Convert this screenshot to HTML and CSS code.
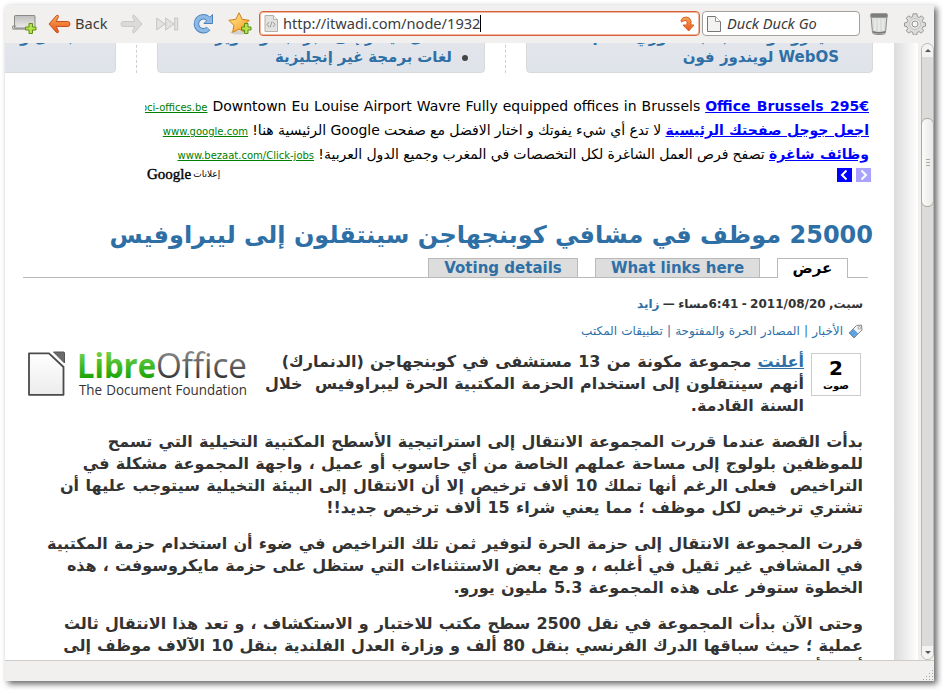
FILE: index.html
```html
<!doctype html>
<html>
	<head>
		<meta charset="utf-8" />
		<title>itwadi</title>
		<link rel="stylesheet" href="styles.css">
	</head>

	<body>
		<div class="window">
			<div class="toolbar">
				<svg class="icon-newtab" width="26" height="22" viewBox="0 0 26 22">
					<defs>
						<linearGradient id="gGrey" x1="0" y1="0" x2="0" y2="1"><stop offset="0" stop-color="#bdbdbb" /><stop offset="1" stop-color="#ececea" /></linearGradient>
						<linearGradient id="gOrange" x1="0" y1="0" x2="0" y2="1"><stop offset="0" stop-color="#f7a95a" /><stop offset="1" stop-color="#e8541c" /></linearGradient>
						<linearGradient id="gStar" x1="0" y1="0" x2="1" y2="1"><stop offset="0" stop-color="#fff29a" /><stop offset="1" stop-color="#f7931e" /></linearGradient>
					</defs>
					<path d="M3.500 2.500h19q.5 0 .5.500v12H2.500V3q0-.5 1-.5z" fill="url(#gGrey)" stroke="#8a8a87" />
					<path d="M.7 15.500V13h3.500" fill="none" stroke="#8a8a87" />
					<path d="M.5 16h23" stroke="#777" />
					<path d="M17 10.500h3.500v3.500H24v3h-3.500v3.500H17V17h-3.500v-3H17z" fill="#b4e04a" stroke="#5f8f14" />
				</svg>
				<svg class="icon-back" width="23" height="20" viewBox="0 0 23 20">
					<path d="M1 10l7.500-8.500q2-1 2 1L8.300 7.500h11.500q2.200 0 2.200 2.500t-2.200 2.500H8.300l2.200 5q0 2-2 1z" fill="url(#gOrange)" stroke="#c4521a" />
				</svg>
				<span class="back-label">Back</span>
				<svg class="icon-forward" width="23" height="20" viewBox="0 0 23 20">
					<path d="M22 10l-7.500-8.500q-2-1-2 1l2.200 5H3.200Q1 7.500 1 10t2.200 2.500h11.500l-2.200 5q0 2 2 1z" fill="#dcdad8" stroke="#cbc9c6" />
				</svg>
				<svg class="icon-skip" width="23" height="14" viewBox="0 0 23 14">
					<path d="M.7 1l8.300 6-8.300 6zM9.700 1l8.300 6-8.300 6zM18.700 1h3v12h-3z" fill="#e4e2e0" stroke="#c6c4c1" />
				</svg>
				<svg class="icon-reload" width="21" height="22" viewBox="0 0 21 22">
					<path d="M15.500 15.500A7 7 0 1 1 15 5.500" fill="none" stroke="#4d83bd" stroke-width="5.500" />
					<path d="M11 10.500h8.500V1.500z" fill="#8db9e6" stroke="#4d83bd" stroke-linejoin="round" />
					<path d="M15.300 15.700A7 7 0 1 1 15 5.500l1 1" fill="none" stroke="#8db9e6" stroke-width="3.700" />
				</svg>
				<svg class="icon-star" width="24" height="23" viewBox="0 0 24 23">
					<ellipse cx="11" cy="20.500" rx="9" ry="2" fill="#d3d1cf" />
					<path d="M11 .8l3.200 6.500 7 1-5 5 1.200 7-6.400-3.200-6.300 3.200 1.200-7-5-5 7-1z" fill="url(#gStar)" stroke="#d07d10" stroke-linejoin="round" />
					<path d="M16.500 11.500H20V15h3v3h-3v3.500h-3.500V18h-3v-3h3z" fill="#b4e04a" stroke="#5f8f14" />
				</svg>
				<div class="url-field">
					<svg width="14" height="17" viewBox="0 0 14 17">
						<path d="M1 .5h8.500l4 4v12H1z" fill="#e2e2e0" stroke="#b3b1ae" />
						<path d="M9.500.5v4h4" fill="#f6f6f5" stroke="#b3b1ae" />
						<path d="M5 7L3 9.500 5 12M9 7l2 2.500L9 12M8 6.500l-2 6" fill="none" stroke="#9b9b99" />
					</svg>
					<span class="url">http://itwadi.com/node/1932</span><span class="caret"></span>
					<svg class="icon-go" width="15" height="16" viewBox="0 0 15 16">
						<path d="M1 4.500Q2 1 6 1t5 4v4h3l-5.300 6L3 9h4V6Q7 4 5 4.300L1.500 6z" fill="url(#gOrange)" stroke="#dc6426" stroke-linejoin="round" />
					</svg>
				</div>
				<div class="search-field">
					<svg width="14" height="16" viewBox="0 0 14 16">
						<path d="M.5.500h8l5 5v10H.5z" fill="#f3f3f2" stroke="#777" />
						<path d="M8.500.5v5h5" fill="#fff" stroke="#999" />
					</svg>
					<span class="search-text">Duck Duck Go</span>
				</div>
				<svg class="icon-trash" width="18" height="22" viewBox="0 0 18 22">
					<path d="M1 3l1.500 16.500q0 2 6.500 2t6.500-2L17 3z" fill="#dcdddb" stroke="#8a8c89" />
					<path d="M3 18q6 2 12 0v1.800q-6 2-12 0z" fill="#777976" />
					<path d="M5 6v11M9 6v12M13 6v11" stroke="#f3f4f2" />
					<rect x=".5" y=".5" width="17" height="4" rx="1.500" fill="#7c7e7b" stroke="#9a9c99" />
				</svg>
				<svg class="icon-gear" width="22" height="22" viewBox="0 0 22 22">
					<path d="M9 .8h4l.4 2.800 1.800.8 2.300-1.600 2.300 2.500-1.500 2.200.8 1.900 2.400.5v3.200l-2.500.6-.8 1.900 1.500 2.200-2.400 2.300-2.300-1.500-1.800.8-.5 2.600H9.300l-.6-2.600-1.800-.8-2.300 1.500-2.300-2.300 1.500-2.200-.8-1.900-2.500-.6V9.900l2.500-.5.8-1.900-1.500-2.300 2.300-2.400 2.300 1.600 1.800-.8z" fill="#dcdcda" stroke="#979794" />
					<circle cx="11" cy="11" r="5.500" fill="#e6e6e4" stroke="#c3c3c0" />
					<circle cx="11" cy="11" r="3" fill="#f3f3f2" stroke="#979794" />
				</svg>
			</div>

			<div class="viewport">
				<div class="page" dir="rtl">
					<div class="cards">
						<div class="card card-first">مايكروسوفت تجذب مطوري نظام<br>WebOS لويندوز فون</div>
						<div class="card card-middle">مدخل ميسر إلى البرمجة وتطوير<br>لغات برمجة غير إنجليزية</div>
						<div class="card card-last">بدائل و</div>
					</div>

					<div class="ads">
						<div class="ad ad-en"><bdi><a class="ad-title" href="#">Office Brussels 295€</a></bdi> <bdi>Downtown Eu Louise Airport Wavre Fully equipped offices in Brussels</bdi> <bdi><a class="ad-url" href="#">www.bci-offices.be</a></bdi></div>
						<div class="ad"><a class="ad-title" href="#">اجعل جوجل صفحتك الرئيسية</a> لا تدع أي شيء يفوتك و اختار الافضل مع صفحت Google الرئيسية هنا! <a class="ad-url" href="#">www.google.com</a></div>
						<div class="ad"><a class="ad-title" href="#">وظائف شاغرة</a> تصفح فرص العمل الشاغرة لكل التخصصات في المغرب وجميع الدول العربية! <a class="ad-url" href="#">www.bezaat.com/Click-jobs</a></div>
						<div class="ads-footer">
							<div class="pager">
								<svg class="next" width="15" height="14" viewBox="0 0 15 14"><path d="M5.500 2.500L10 7l-4.500 4.500" /></svg>
								<svg class="prev" width="15" height="14" viewBox="0 0 15 14"><path d="M9.500 2.500L5 7l4.500 4.500" /></svg>
							</div>
							<div class="google-ads"><span class="ads-by">إعلانات</span><span class="google">Google</span></div>
						</div>
					</div>

					<h1 class="title">25000 موظف في مشافي كوبنجهاجن سينتقلون إلى ليبراوفيس</h1>

					<div class="tabs">
						<div class="tab active">عرض</div>
						<div class="tab links">What links here</div>
						<div class="tab voting">Voting details</div>
					</div>

					<div class="submitted">سبت, 2011/08/20 - 6:41مساء — <a href="#">زايد</a></div>

					<div class="terms">
						<svg width="15" height="15" viewBox="0 0 15 15">
							<path d="M1 9L8.500 1.500l5-.5.5 5L6 14z" fill="#f4f4f4" stroke="#888" />
							<path d="M1.500 9L5.500 5l4.500 4.500L6 13.500z" fill="#3f92da" />
							<path d="M3 7.500L7.500 12M4.500 6L9 10.500M3 10.500L6.500 7M5 12.200L8.500 9" stroke="#a6d2f5" stroke-width=".5" />
							<circle cx="11.300" cy="3.800" r="1.300" fill="#fff" stroke="#888" stroke-width=".8" />
						</svg>
						<span>الأخبار | المصادر الحرة والمفتوحة | تطبيقات المكتب</span>
					</div>

					<div class="article">
						<div class="lead">
							<div class="votes"><span class="count">2</span><span class="unit">صوت</span></div>
							<p class="lead-text"><a href="#">أعلنت</a> مجموعة مكونة من 13 مستشفى في كوبنجهاجن (الدنمارك)<br>أنهم سينتقلون إلى استخدام الحزمة المكتبية الحرة ليبراوفيس&nbsp; خلال<br>السنة القادمة.</p>
							<svg class="logo" width="222" height="50" viewBox="0 0 222 50" direction="ltr">
								<defs>
									<linearGradient id="gLibre" x1="0" y1="0" x2="0" y2="1"><stop offset=".2" stop-color="#72d34e" /><stop offset=".8" stop-color="#18a303" /></linearGradient>
									<linearGradient id="gOffice" x1="0" y1="0" x2="0" y2="1"><stop offset=".2" stop-color="#8a8a8a" /><stop offset=".8" stop-color="#333" /></linearGradient>
									<linearGradient id="gDoc" x1="0" y1="0" x2="0" y2="1"><stop offset="0" stop-color="#fff" /><stop offset="1" stop-color="#ececec" /></linearGradient>
								</defs>
								<path d="M4 2.300h20L38.500 16v27.800H4z" fill="url(#gDoc)" stroke="#4a4a4a" stroke-width="1.800" stroke-linejoin="round" />
								<path d="M28.500 1H38.500q1 0 1 1V12z" fill="#6b6b6b" stroke="#555" />
								<text class="libre" x="52" y="27" textLength="79" lengthAdjust="spacingAndGlyphs" fill="url(#gLibre)">Libre</text>
								<text class="office" x="131" y="27" textLength="91" lengthAdjust="spacingAndGlyphs" fill="url(#gOffice)">Office</text>
								<text class="tdf" x="54" y="43.500" textLength="168" lengthAdjust="spacingAndGlyphs">The Document Foundation</text>
							</svg>
						</div>
						<p>بدأت القصة عندما قررت المجموعة الانتقال إلى استراتيجية الأسطح المكتبية التخيلية التي تسمح<br>للموظفين بلولوج إلى مساحة عملهم الخاصة من أي حاسوب أو عميل ، واجهة المجموعة مشكلة في<br><span class="loose">التراخيص&nbsp; فعلى الرغم أنها تملك 10 ألاف ترخيص إلا أن الانتقال إلى البيئة التخيلية سيتوجب عليها أن</span><br>تشتري ترخيص لكل موظف ؛ مما يعني شراء 15 ألاف ترخيص جديد!!</p>
						<p>قررت المجموعة الانتقال إلى حزمة الحرة لتوفير ثمن تلك التراخيص في ضوء أن استخدام حزمة المكتبية<br><span class="tight">في المشافي غير ثقيل في أغلبه ، و مع بعض الاستثناءات التي ستظل على حزمة مايكروسوفت ، هذه</span><br>الخطوة ستوفر على هذه المجموعة 5.3 مليون يورو.</p>
						<p class="tight">وحتى الآن بدأت المجموعة في نقل 2500 سطح مكتب للاختبار و الاستكشاف ، و تعد هذا الانتقال ثالث<br>عملية ؛ حيث سباقها الدرك الفرنسي بنقل 80 ألف و وزارة العدل الفلندية بنقل 10 الآلاف موظف إلى<br>أوبن أوفيس.</p>
					</div>
				</div>
				<div class="page-shadow"></div>
				<div class="scrollbar">
					<div class="step up"></div>
					<div class="thumb"></div>
					<div class="step down"></div>
				</div>
			</div>

			<div class="statusbar">
				<svg width="12" height="12" viewBox="0 0 12 12" fill="#a5a3a0">
					<path d="M10 1h1v1h-1zM10 4h1v1h-1zM10 7h1v1h-1zM10 10h1v1h-1zM7 4h1v1h-1zM7 7h1v1h-1zM7 10h1v1h-1zM4 7h1v1h-1zM4 10h1v1h-1zM1 10h1v1h-1z" />
				</svg>
			</div>
		</div>
	</body>
</html>
```
FILE: styles.css
```css
body {
	margin: 0;
	padding: 5px;
	height: 680px;
	overflow: hidden;
	background-color: #ffffff;
	font-family: "DejaVu Sans", sans-serif;
	color: #333333;
}

a {
	color: #2e70a6;
}

.window {
	width: 929px;
	height: 676px;
	display: flex;
	flex-direction: column;
	background-color: #f1f0ee;
	box-shadow: 3px 3px 6px rgba(0, 0, 0, 0.6);
}

/* toolbar */
.toolbar {
	box-sizing: border-box;
	height: 38px;
	padding-bottom: 1px;
	flex: none;
	display: flex;
	align-items: center;
	font-family: "Noto Sans", sans-serif;
	font-size: 14.6px;
	line-height: 20px;
	color: #3c3c3c;
}

.toolbar svg {
	flex: none;
}

.icon-newtab {
	margin-left: 7px;
}

.icon-back {
	margin-left: 10px;
}

.back-label {
	width: 34px;
	margin-left: 4px;
	padding-bottom: 2px;
}

.icon-forward {
	margin-left: 11px;
}

.icon-skip {
	margin-left: 13px;
}

.icon-reload {
	margin-left: 14px;
}

.icon-star {
	margin-left: 14px;
}

.url-field {
	box-sizing: border-box;
	width: 441px;
	height: 25px;
	margin-left: 7px;
	padding: 0 4px;
	display: flex;
	align-items: center;
	border: 1px solid #d9623a;
	box-shadow: inset 0 0 0 1px #f0b7a0;
	border-radius: 4px;
	background-color: #ffffff;
}

.url {
	margin-left: 5px;
	padding-bottom: 2px;
}

.caret {
	width: 1px;
	height: 17px;
	background-color: #000000;
}

.icon-go {
	margin-left: auto;
}

.search-field {
	box-sizing: border-box;
	width: 158px;
	height: 25px;
	margin-left: 2px;
	padding: 0 4px;
	display: flex;
	align-items: center;
	border: 1px solid #a3a19e;
	border-radius: 4px;
	background-color: #ffffff;
}

.search-text {
	margin-left: 6px;
	padding-bottom: 2px;
	font-style: italic;
}

.icon-trash {
	margin-left: 10px;
}

.icon-gear {
	margin-left: 16px;
}

/* web page */
.viewport {
	height: 617px;
	display: flex;
	overflow: hidden;
}

.page {
	width: 889px;
	flex: none;
	background-color: #ffffff;
	white-space: nowrap;
}

.page-shadow {
	width: 24px;
	background: linear-gradient(to right, #dcdcdc, #ffffff);
}

.cards {
	display: flex;
	height: 30px;
	padding-right: 21px;
	overflow: hidden;
}

.card {
	box-sizing: border-box;
	height: 130px;
	margin-top: -100px;
	padding-top: 83px;
	flex: none;
	position: relative;
	border: 1px solid #d9d9d9;
	border-radius: 4px;
	background: linear-gradient(#eeeeee, #dfe3ea);
	color: #2e70a6;
	font-size: 15px;
	font-weight: bold;
	line-height: 20px;
}

.card-first {
	width: 347px;
	padding-right: 33px;
}

.card-middle {
	width: 328px;
	margin-right: 41px;
	padding-right: 32px;
	word-spacing: -0.4px;
}

.card-middle::before {
	content: "";
	position: absolute;
	top: 111px;
	right: 16px;
	width: 6px;
	height: 6px;
	border-radius: 50%;
	background-color: #444444;
}

.card-last {
	width: 130px;
	margin-right: 41px;
	padding-right: 42px;
}

.card-middle::after,
.card-last::after {
	content: "";
	position: absolute;
	top: 0;
	right: -22px;
	height: 129px;
	border-left: 1px dashed #d0d0d0;
}

.ads {
	width: 724px;
	margin: 21px 25px 0 0;
	color: #000000;
	font-size: 14px;
	line-height: 24px;
}

.ad {
	height: 24px;
	overflow: hidden;
	word-spacing: -0.2px;
}

.ad-en {
	word-spacing: 0.5px;
}

.ad-title {
	color: #0000ff;
	font-weight: bold;
	word-spacing: 0.5px;
}

.ad-en .ad-title {
	word-spacing: 1.5px;
}

.ad-url {
	color: #008000;
	font-size: 10px;
}

.ads-footer {
	height: 16px;
	display: flex;
	justify-content: space-between;
	align-items: center;
	line-height: 16px;
}

.pager {
	display: flex;
	gap: 4px;
	margin: 2px -2px 0 0;
}

.pager svg {
	background-color: #0000ff;
	fill: none;
	stroke: #ffffff;
	stroke-width: 2;
}

.pager .next {
	background-color: #a9a3ff;
}

.google-ads {
	display: flex;
	align-items: center;
	gap: 2px;
	margin-left: 2px;
}

.google {
	font-family: "Liberation Serif", serif;
	font-size: 15px;
	-webkit-text-stroke: 0.4px #000000;
}

.ads-by {
	font-size: 9px;
}

.title {
	margin: 37px 21px 0 0;
	color: #2e70a6;
	font-size: 24px;
	line-height: 32px;
}

.tabs {
	display: flex;
	height: 19px;
	margin: 7px 26px 0 18px;
	padding-right: 20px;
	border-bottom: 1px solid #b9b9b9;
	color: #2e70a6;
	font-size: 15px;
	font-weight: bold;
	line-height: 18px;
	text-align: center;
}

.tab {
	box-sizing: border-box;
	height: 19px;
	border: 1px solid #b9b9b9;
	border-bottom: none;
	background-color: #dddddd;
}

.tab.active {
	width: 71px;
	height: 20px;
	background-color: #ffffff;
	color: #000000;
}

.links {
	width: 165px;
	margin-right: 17px;
}

.voting {
	width: 150px;
	margin-right: 17px;
}

.submitted {
	margin: 18px 31px 0 0;
	font-size: 12px;
	font-weight: bold;
	line-height: 16px;
	word-spacing: -0.8px;
}

.submitted a {
	text-decoration: none;
}

.terms {
	display: flex;
	align-items: center;
	gap: 5px;
	margin: 11px 31px 0 0;
	color: #2e70a6;
	font-size: 12px;
	line-height: 16px;
	word-spacing: 0.4px;
}

.article {
	margin: 12px 31px 0 0;
	font-size: 16px;
	font-weight: bold;
	line-height: 22px;
	word-spacing: 0.7px;
}

.article p {
	margin: 0 0 14px;
}

.loose {
	word-spacing: 0.9px;
}

.tight {
	word-spacing: 0.5px;
}

.lead {
	display: flex;
	height: 66px;
	margin-bottom: 14px;
}

.votes {
	box-sizing: border-box;
	width: 50px;
	height: 43px;
	margin: 2px 2px 0 7px;
	flex: none;
	display: flex;
	flex-direction: column;
	align-items: center;
	border: 1px solid #cccccc;
	color: #000000;
}

.count {
	font-size: 20px;
	line-height: 28px;
}

.unit {
	font-size: 10px;
	line-height: 8px;
}

.logo {
	flex: none;
	margin: 0 auto 0 20px;
}

.libre,
.office {
	font-family: "Open Sans", sans-serif;
	font-size: 34px;
	font-weight: 700;
	word-spacing: 0;
}

.office {
	font-weight: 400;
}

.tdf {
	font-family: "Open Sans", sans-serif;
	font-size: 14.5px;
	font-weight: 400;
	fill: #333333;
}

/* scrollbar */
.scrollbar {
	box-sizing: border-box;
	width: 13px;
	margin-left: 3px;
	display: flex;
	flex-direction: column;
	border: 1px solid #bab8b5;
	border-radius: 7px;
	background-color: #dddbd9;
}

.step {
	height: 13px;
	display: flex;
	align-items: center;
	justify-content: center;
	border-radius: 6px 6px 0 0;
	background-color: #f4f3f2;
}

.step::before {
	content: "";
	border: 3px solid transparent;
	border-top: none;
	border-bottom-color: #555555;
}

.step.down {
	margin-top: auto;
	border-radius: 0 0 6px 6px;
}

.step.down::before {
	border: 3px solid transparent;
	border-bottom: none;
	border-top-color: #555555;
}

.thumb {
	box-sizing: border-box;
	height: 89px;
	margin: 61px -1px 0;
	display: flex;
	align-items: center;
	justify-content: center;
	border: 1px solid #aaa8a5;
	border-radius: 6px;
	background: linear-gradient(to right, #fbfbfa, #e9e8e6);
}

.thumb::before {
	content: "";
	width: 4px;
	height: 7px;
	background: repeating-linear-gradient(#aaa8a5 0 1px, transparent 1px 3px);
}

.statusbar {
	box-sizing: border-box;
	flex: 1;
	display: flex;
	justify-content: flex-end;
	align-items: flex-end;
	border-top: 1px solid #cfcdca;
}
```
